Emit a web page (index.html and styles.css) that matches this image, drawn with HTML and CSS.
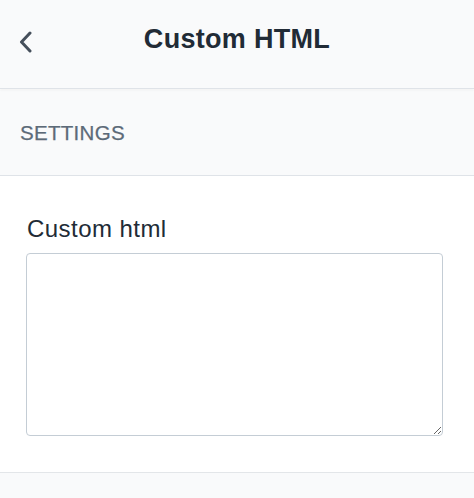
FILE: index.html
```html
<!DOCTYPE html>
<html>
<head>
<meta charset="utf-8">
<link rel="stylesheet" href="styles.css">
</head>
<body>
<div class="app">
  <header class="topbar">
    <button class="back" aria-label="Back">
      <svg width="16" height="22" viewBox="0 0 16 22"><path d="M12 2 L3.5 11 L12 20" fill="none" stroke="#454f5b" stroke-width="3" stroke-linecap="round" stroke-linejoin="round"/></svg>
    </button>
    <h1 class="title">Custom HTML</h1>
  </header>
  <div class="section-head">SETTINGS</div>
  <div class="content">
    <label class="label" for="html">Custom html</label>
    <textarea id="html" class="field"></textarea>
  </div>
  <div class="footer"></div>
</div>
</body>
</html>
```
FILE: styles.css
```css
html, body {
  margin: 0;
  padding: 0;
  background: #ffffff;
}
body {
  font-family: "Liberation Sans", Arial, sans-serif;
  color: #212b36;
}
.app {
  display: flex;
  flex-direction: column;
  min-height: 498px;
}
.topbar {
  position: relative;
  height: 89px;
  background: #f9fafb;
  border-bottom: 1px solid #dfe3e8;
  box-shadow: 0 1px 2px rgba(0,0,0,0.06);
  display: flex;
  align-items: center;
  justify-content: center;
  padding-bottom: 10px;
  box-sizing: border-box;
}
.back {
  position: absolute;
  left: 16px;
  top: 31px;
  border: 0;
  background: none;
  padding: 0;
  width: 20px;
  height: 22px;
  display: flex;
  align-items: center;
  justify-content: center;
}
.title {
  margin: 0;
  font-size: 27px;
  font-weight: 700;
  color: #212b36;
  letter-spacing: 0.3px;
}
.section-head {
  margin-top: 1px;
  height: 86px;
  box-sizing: border-box;
  background: #f9fafb;
  border-bottom: 1px solid #dfe3e8;
  display: flex;
  align-items: center;
  padding: 0 20px;
  font-size: 20.5px;
  letter-spacing: 0.3px;
  color: #5c6a78;
  -webkit-text-stroke: 0.25px #5c6a78;
}
.content {
  background: #ffffff;
  padding: 39px 31px 36px 26px;
  display: flex;
  flex-direction: column;
}
.label {
  font-size: 24px;
  line-height: 28px;
  letter-spacing: 0.45px;
  color: #212b36;
  margin-bottom: 10px;
  padding-left: 1px;
}
.field {
  width: 417px;
  height: 183px;
  box-sizing: border-box;
  border: 1px solid #c4cdd5;
  border-radius: 4px;
  background: #ffffff;
  resize: both;
  margin: 0;
  font-family: "Liberation Sans", Arial, sans-serif;
  font-size: 16px;
}
.footer {
  flex: 1;
  background: #f9fafb;
  border-top: 1px solid #e3e6e9;
}
```
